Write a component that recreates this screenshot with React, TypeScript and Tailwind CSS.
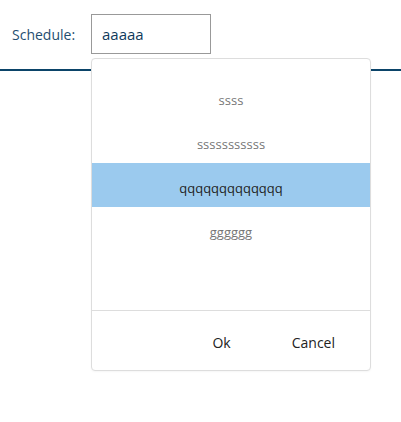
import React from "react";

const items = ["ssss", "sssssssssss", "qqqqqqqqqqqqq", "gggggg"];

export default function App() {
  const selected = 2;

  return (
    <div className="relative w-[401px] h-[422px] bg-white" style={{ fontFamily: "'Open Sans', sans-serif" }}>
      <div className="flex items-center pt-[14px] pl-[12px]">
        <span className="w-[79px] shrink-0 text-[14px] text-[#1f4e70]">Schedule:</span>
        <div className="flex items-center w-[120px] h-[40px] border border-[#999999] pl-[10px] text-[15px] text-[#0f3a5c]">
          aaaaa
        </div>
      </div>
      <div className="mt-[15px] h-[2px] w-full bg-[#0b4469]" />

      {/* dropdown */}
      <div className="absolute left-[91px] top-[58px] w-[280px] h-[313px] flex flex-col bg-white border border-[#dddddd] rounded-[4px] shadow-[0_1px_2px_rgba(0,0,0,0.04)]">
        <div className="flex-1 pt-[16px]">
          {items.map((item, i) => (
            <div
              key={item}
              className={
                i === selected
                  ? "h-[44px] pt-[16px] text-center text-[13px] leading-[18px] bg-[#9bcaee] text-[#1f1f1f]"
                  : "h-[44px] pt-[16px] text-center text-[13px] leading-[18px] text-[#767676]"
              }
            >
              {item}
            </div>
          ))}
        </div>
        <div className="h-[60px] shrink-0 flex items-center justify-end gap-[61px] pt-[3px] pr-[35px] border-t border-[#dddddd] text-[14px] text-[#222222]">
          <button>Ok</button>
          <button>Cancel</button>
        </div>
      </div>
    </div>
  );
}
